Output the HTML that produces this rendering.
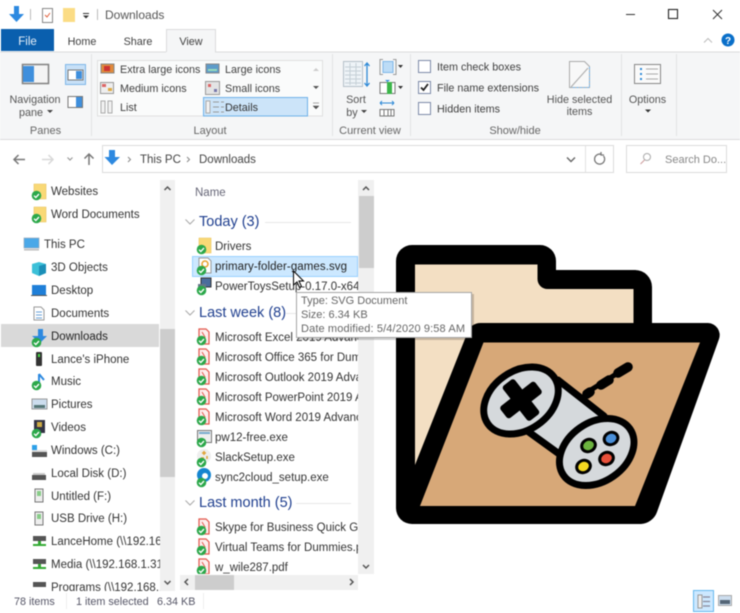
<!DOCTYPE html>
<html><head><meta charset="utf-8"><style>
html,body{margin:0;padding:0;background:#fff;overflow:hidden;width:740px;height:613px}
svg{display:block;filter:blur(.4px)}
text{font-family:"Liberation Sans",sans-serif;font-size:11.5px;fill:#333}
.r{font-size:10.8px;fill:#3f3f3f}
.l{font-size:11px;fill:#666;text-anchor:middle}
.c{text-anchor:middle}
.g{font-size:14.5px;fill:#1f3f8f}
.t{font-size:11px;fill:#666}
</style></head><body>
<svg width="740" height="613" viewBox="0 0 740 613" xmlns="http://www.w3.org/2000/svg">
<defs>
<symbol id="ck" viewBox="0 0 11 11" overflow="visible"><circle cx="5.5" cy="5.5" r="4.8" fill="#2ba84a"/><path d="M3 5.7l1.800 1.800L8 4" fill="none" stroke="#fff" stroke-width="1.300"/></symbol>
<symbol id="fo" viewBox="0 0 16 18" overflow="visible"><path d="M3 1h12v15H3z" fill="#f9d976" stroke="#e8c25c" stroke-width=".6"/><use href="#ck" x="0" y="7" width="11" height="11"/></symbol>
<symbol id="pdf" viewBox="0 0 16 18" overflow="visible"><path d="M3 1h7l3 3v12H3z" fill="#fdeeee" stroke="#e2574c" stroke-width="1.200"/><path d="M6 4l3 5-4 2 5 1" fill="none" stroke="#e2574c" stroke-width="1"/><use href="#ck" x="0" y="7" width="11" height="11"/></symbol>
<clipPath id="fl"><rect x="180" y="180" width="178" height="394"/></clipPath>
<clipPath id="sb"><rect x="0" y="180" width="160" height="411"/></clipPath>
</defs>

<!-- Title bar -->
<path d="M14 7v8h-5l7.500 8 7.500-8h-5V7z" fill="#2d89e0" transform="translate(0,-1)"/>
<rect x="30" y="9" width="1" height="11" fill="#bbb"/>
<rect x="42.500" y="8.500" width="10" height="14" fill="#fff" stroke="#888"/><path d="M45 15l2 2 3-4" fill="none" stroke="#e0603c" stroke-width="1"/>
<rect x="63" y="8" width="12" height="14" fill="#fbdc85"/>
<rect x="83" y="13" width="6" height="1" fill="#333"/><path d="M83 15.500h6l-3 3z" fill="#333"/>
<rect x="97" y="9" width="1" height="11" fill="#bbb"/>
<text x="105" y="19" style="font-size:12px;fill:#555">Downloads</text>
<path d="M626 14.500h9" stroke="#333" stroke-width="1"/>
<rect x="668.500" y="9.500" width="9" height="9" fill="none" stroke="#222" stroke-width="1.100"/>
<path d="M713 10l9 9M722 10l-9 9" stroke="#333" stroke-width="1"/>

<!-- Tabs -->
<rect x="1" y="29" width="53" height="22" fill="#0a5fae"/>
<text x="27.500" y="45" class="c" style="fill:#e9f1f9;font-size:11.500px">File</text>
<text x="82" y="45" class="c r">Home</text>
<text x="138" y="45" class="c r">Share</text>
<path d="M166.500 52V29.500h49V52" fill="#f5f6f7" stroke="#dadbdc"/>
<text x="191" y="45" class="c r">View</text>
<path d="M708 42.500l4-4 4 4" transform="translate(-4,0)" fill="none" stroke="#bbb" stroke-width="1"/>
<circle cx="728" cy="40" r="6.500" fill="#0a6fc9"/><text x="728" y="44" class="c" style="font-size:10px;font-weight:bold;fill:#fff">?</text>

<!-- Ribbon -->
<rect x="0" y="52" width="740" height="87" fill="#f5f6f7"/>
<rect x="0" y="51.500" width="166" height="1" fill="#dadbdc"/><rect x="215" y="51.500" width="525" height="1" fill="#dadbdc"/>
<rect x="0" y="139" width="740" height="1" fill="#dadbdc"/>
<rect x="91" y="54" width="1" height="82" fill="#e2e3e4"/><rect x="332" y="54" width="1" height="82" fill="#e2e3e4"/><rect x="410" y="54" width="1" height="82" fill="#e2e3e4"/><rect x="621" y="54" width="1" height="82" fill="#e2e3e4"/><rect x="676" y="54" width="1" height="82" fill="#e2e3e4"/>
<!-- panes -->
<rect x="22.500" y="64.500" width="26" height="19" fill="#f4f4f4" stroke="#808080" stroke-width="1.500"/><rect x="23" y="66" width="11" height="16" fill="#3f8fdc"/>
<rect x="65.500" y="64.500" width="20" height="20" fill="#c7e0f7" stroke="#7fb7e8"/><rect x="68" y="70" width="15" height="10" fill="#fff" stroke="#777"/><rect x="76" y="71" width="6" height="8" fill="#3f8fdc"/>
<rect x="68" y="96.500" width="14.500" height="11" fill="#fff" stroke="#777"/><rect x="76" y="97" width="6" height="10" fill="#3f8fdc"/>
<text x="35" y="103" class="c r" style="fill:#555">Navigation</text><text x="31" y="116" class="c r" style="fill:#555">pane</text><path d="M47 110h6l-3 3z" fill="#444"/>
<text x="45.500" y="134" class="l">Panes</text>
<!-- layout -->
<rect x="97.500" y="60.500" width="225" height="55.500" fill="#fafbfb" stroke="#dfe0e1"/>
<rect x="203.500" y="97.500" width="104" height="18.500" fill="#cce4f9" stroke="#6fb1e8"/>
<rect x="101" y="64" width="13" height="9" fill="#e08a3c" stroke="#888"/><rect x="104" y="66" width="6" height="5" fill="#c33"/>
<rect x="206" y="64" width="13" height="9" fill="#5d9bc9" stroke="#888"/><rect x="208" y="69" width="9" height="2" fill="#9db"/>
<rect x="100.500" y="82.500" width="13" height="11" fill="#eee" stroke="#999"/><rect x="102" y="84" width="4" height="3" fill="#d66"/><rect x="108" y="88" width="4" height="3" fill="#da4"/>
<rect x="205.500" y="81.500" width="14" height="13" fill="#e4e4e4" stroke="#999"/><rect x="208" y="84" width="3" height="3" fill="#d66"/><rect x="214" y="89" width="3" height="3" fill="#77a"/>
<path d="M101 101h4v12h-4zM108 101h4v12h-4z" fill="#f2f2f2" stroke="#aaa"/>
<path d="M206 101h4v12h-4z" fill="#f2f2f2" stroke="#aaa"/><path d="M213 102h6M213 107h6M213 112h6M221 102h3M221 107h3M221 112h3" stroke="#999"/>
<text x="120" y="73" class="r">Extra large icons</text><text x="225" y="73" class="r">Large icons</text>
<text x="120" y="92" class="r">Medium icons</text><text x="225" y="92" class="r">Small icons</text>
<text x="120" y="111" class="r">List</text><text x="225" y="111" class="r" style="fill:#333">Details</text>
<path d="M313 71l3-3 3 3z" fill="#ccc"/><path d="M313 86h6l-3 3z" fill="#555"/><path d="M313 103h6M313 106h6l-3 3z" fill="#555" stroke="#555" stroke-width=".5"/>
<text x="210" y="134" class="l">Layout</text>
<!-- current view -->
<rect x="343.500" y="61.500" width="19" height="25" fill="#eef3f7" stroke="#b5c0c8"/><path d="M345 67h16M345 71h16M345 75h16M345 79h16M345 83h16M350 63v22M356 63v22" stroke="#c5cfd6"/>
<path d="M367 63v23M364.500 66l2.500-3 2.500 3M364.500 83l2.500 3 2.500-3" fill="none" stroke="#2d89d6" stroke-width="1.300"/>
<text x="356" y="103" class="c r" style="fill:#555">Sort</text><text x="352" y="116" class="c r" style="fill:#555">by</text><path d="M361 110h6l-3 3z" fill="#444"/>
<rect x="383" y="61.500" width="10" height="11" fill="#bcdcf6" stroke="#7fb7e8"/><path d="M383 59.500h-3v15h3M393 59.500h3v15h-3" fill="none" stroke="#999"/>
<path d="M398 65h5l-2.500 3z" fill="#333"/>
<rect x="380" y="82.500" width="15" height="11" fill="#fff" stroke="#777"/><rect x="387" y="82" width="5" height="12" fill="#3cb54a"/><path d="M385 80h5l-2.500 2z" fill="#2d89d6"/>
<path d="M398 86h5l-2.500 3z" fill="#333"/>
<path d="M380 103h14M380 103l2-2M380 103l2 2M394 103l-2-2M394 103l-2 2" stroke="#2d89d6" stroke-width="1" fill="none"/>
<rect x="380" y="109.500" width="14" height="6.500" fill="#fff" stroke="#777"/><path d="M384 110v6M388 110v6M391 110v6" stroke="#777"/>
<text x="370" y="134" class="l">Current view</text>
<!-- show hide -->
<rect x="418.500" y="60.500" width="12" height="12" fill="#fff" stroke="#7d8aa8"/><rect x="418.500" y="81.500" width="12" height="12" fill="#fff" stroke="#7d8aa8"/><rect x="418.500" y="102.500" width="12" height="12" fill="#fff" stroke="#7d8aa8"/>
<path d="M421 87.500l2.500 2.500 4.500-6" fill="none" stroke="#222" stroke-width="1.800"/>
<text x="437" y="70.500" class="r">Item check boxes</text><text x="437" y="91.500" class="r">File name extensions</text><text x="437" y="112.500" class="r">Hidden items</text>
<path d="M569.500 61.500h15l5 5v21h-20z" fill="#f8f8f8" stroke="#aaa"/><path d="M571 87l17-19" stroke="#aaa"/><path d="M589.500 67v20.500H571" fill="none" stroke="#6fb1e8" stroke-dasharray="2 1.500"/>
<text x="579.500" y="103" class="c r" style="fill:#555">Hide selected</text><text x="579.500" y="115" class="c r" style="fill:#555">items</text>
<text x="515" y="134" class="l">Show/hide</text>
<!-- options -->
<rect x="634.500" y="64.500" width="26" height="19" fill="#fafafa" stroke="#888"/><path d="M640 69h2M640 74h2M640 79h2" stroke="#2d89d6" stroke-width="2"/><path d="M646 69h12M646 74h12M646 79h12" stroke="#aaa"/>
<text x="647.500" y="103" class="c r" style="fill:#555">Options</text><path d="M645 109.500h6l-3 3z" fill="#333"/>

<!-- Nav row -->
<path d="M25 159.500H14M18.500 155l-4.500 4.500 4.500 4.500" fill="none" stroke="#777" stroke-width="1.500"/>
<path d="M42 159.500h11M48.500 155l4.500 4.500-4.500 4.500" fill="none" stroke="#d8d8d8" stroke-width="1.500"/>
<path d="M67.500 157.500l2.500 2.500 2.500-2.500" fill="none" stroke="#999" stroke-width="1.200"/>
<path d="M89 165v-11M84.500 158.500l4.500-4.500 4.500 4.500" fill="none" stroke="#777" stroke-width="1.500"/>
<rect x="102.500" y="145.500" width="511" height="27" fill="#fff" stroke="#dcdcdc"/>
<path d="M109 150h6v7h5l-8 8-7.500-8h4.500z" fill="#2d89e0"/>
<path d="M128 157l2.500 2.500-2.500 2.500M187 157l2.500 2.500-2.500 2.500" fill="none" stroke="#888"/>
<text x="140" y="163" style="font-size:11.500px;fill:#444">This PC</text><text x="199" y="163" style="font-size:11.500px;fill:#444">Downloads</text>
<path d="M567 157.500l4 4 4-4" fill="none" stroke="#666" stroke-width="1.400"/>
<rect x="585" y="146" width="1" height="26" fill="#e2e2e2"/>
<path d="M603.500 156a5 5 0 1 1-2-1.500M601 152v3h3" fill="none" stroke="#777" stroke-width="1.300"/>
<rect x="626.500" y="145.500" width="100" height="27" fill="#fff" stroke="#dcdcdc"/>
<circle cx="647" cy="157" r="3.500" fill="none" stroke="#aaa"/><path d="M644.500 160l-4 4" stroke="#c99" stroke-width="1"/>
<text x="665" y="163" style="font-size:11px;fill:#888">Search Do...</text>

<!-- Sidebar -->
<rect x="1" y="324" width="158" height="23" fill="#d9d9d9"/>
<rect x="160" y="180" width="15" height="411" fill="#f0f0f0"/>
<rect x="160" y="329" width="15" height="148" fill="#cdcdcd"/>
<path d="M164.500 190l3-3 3 3" fill="none" stroke="#555" stroke-width="1.500"/><path d="M164.500 581l3 3 3-3" fill="none" stroke="#555" stroke-width="1.500"/>
<g clip-path="url(#sb)">
<use href="#fo" x="31" y="183" width="16" height="18"/><use href="#fo" x="31" y="206" width="16" height="18"/>
<rect x="24" y="238" width="15" height="10" fill="#4aa8e8" stroke="#9ab" stroke-width=".7"/><rect x="24" y="249" width="15" height="1.500" fill="#bbb"/>
<path d="M39 262l7 2v9l-7 3-7-3v-9z" fill="#3cc0d8"/><path d="M39 266v10l7-3v-9z" fill="#1b8fb8"/>
<rect x="32" y="285" width="14" height="10" fill="#1f7fd8"/><rect x="31" y="295" width="16" height="1" fill="#555"/>
<path d="M34 307h7l3 3v10H34z" fill="#fff" stroke="#999"/><path d="M36 312h6M36 315h6M36 318h6" stroke="#68a0d8"/>
<path d="M38 329h5v7h4l-7 7-8-7h6z" fill="#2d89e0"/><use href="#ck" x="31" y="337" width="11" height="11"/>
<rect x="36" y="352" width="6" height="14" rx="1" fill="#333"/><rect x="38" y="354" width="2" height="3" fill="#4d4"/>
<path d="M39 374v12M39 374l5 6" fill="none" stroke="#2d89e0" stroke-width="2"/><use href="#ck" x="31" y="380" width="11" height="11"/>
<rect x="32" y="399" width="15" height="10" fill="#cde" stroke="#999"/><rect x="34" y="405" width="11" height="3" fill="#577"/>
<rect x="34" y="420" width="11" height="13" fill="#334"/><rect x="37" y="422" width="5" height="5" fill="#ca4"/><use href="#ck" x="31" y="428" width="11" height="11"/>
<rect x="32" y="445" width="5" height="5" fill="#2da0e8"/><rect x="32" y="452" width="15" height="5" fill="#555"/><rect x="32" y="450" width="15" height="2" fill="#ddd"/>
<rect x="32" y="475" width="14" height="5" fill="#555"/><rect x="33" y="473" width="12" height="2" fill="#ccc"/>
<rect x="35" y="489" width="8" height="13" fill="#eee" stroke="#777"/><rect x="37" y="491" width="4" height="5" fill="#8c8"/>
<rect x="35" y="512" width="8" height="13" fill="#eee" stroke="#777"/><rect x="37" y="514" width="4" height="5" fill="#8c8"/>
<rect x="33" y="536" width="13" height="5" fill="#555"/><rect x="33" y="544" width="13" height="2" fill="#3a3"/><rect x="38" y="541" width="3" height="4" fill="#3a3"/>
<rect x="33" y="559" width="13" height="5" fill="#555"/><rect x="33" y="567" width="13" height="2" fill="#3a3"/><rect x="38" y="564" width="3" height="4" fill="#3a3"/>
<rect x="33" y="582" width="13" height="5" fill="#555"/>
<text x="51" y="195">Websites</text><text x="51" y="218">Word Documents</text>
<text x="44" y="248">This PC</text><text x="51" y="271">3D Objects</text><text x="51" y="294">Desktop</text><text x="51" y="317">Documents</text><text x="51" y="340" style="fill:#222">Downloads</text><text x="51" y="363">Lance's iPhone</text><text x="51" y="385">Music</text><text x="51" y="408">Pictures</text><text x="51" y="431">Videos</text><text x="51" y="454">Windows (C:)</text><text x="51" y="477">Local Disk (D:)</text><text x="51" y="500">Untitled (F:)</text><text x="51" y="522">USB Drive (H:)</text><text x="51" y="545">LanceHome (\\192.168.1.31)</text><text x="51" y="568">Media (\\192.168.1.31)</text><text x="51" y="591">Programs (\\192.168.1.31)</text>
</g>

<!-- File list -->
<text x="195" y="196" style="fill:#667">Name</text>
<rect x="358" y="180" width="16" height="394" fill="#f0f0f0"/>
<rect x="359" y="196" width="15" height="72" fill="#cdcdcd"/>
<path d="M363 190l3-3 3 3" fill="none" stroke="#555" stroke-width="1.500"/><path d="M363 565l3 3 3-3" fill="none" stroke="#555" stroke-width="1.500"/>
<rect x="180" y="575" width="178" height="15" fill="#f0f0f0"/><rect x="195" y="575" width="39" height="15" fill="#cdcdcd"/>
<path d="M188 579l-3 3 3 3" fill="none" stroke="#555" stroke-width="1.500"/><path d="M350 579l3 3-3 3" fill="none" stroke="#555" stroke-width="1.500"/>
<g clip-path="url(#fl)">
<path d="M185.500 219.500l4.500 4.500 4.500-4.500M185.500 310.500l4.500 4.500 4.500-4.500M185.500 500.500l4.500 4.500 4.500-4.500" fill="none" stroke="#aaa" stroke-width="1.100"/>
<text x="199" y="226" class="g">Today (3)</text><rect x="265" y="222" width="86" height="1" fill="#e8e8e8"/>
<text x="199" y="317" class="g">Last week (8)</text><rect x="286" y="313" width="65" height="1" fill="#e8e8e8"/>
<text x="199" y="507" class="g">Last month (5)</text><rect x="296" y="503" width="55" height="1" fill="#e8e8e8"/>
<rect x="192.500" y="256.500" width="165" height="20" fill="#cce8ff" stroke="#99d1ff"/>
<use href="#fo" x="196" y="237" width="16" height="18"/>
<path d="M199 258h9l3 3v12h-12z" fill="#fff" stroke="#999"/><circle cx="205" cy="264" r="3" fill="none" stroke="#e8a02c" stroke-width="1.500"/><use href="#ck" x="196" y="265" width="11" height="11"/>
<rect x="201" y="278" width="10" height="9" fill="#4a6d9c" stroke="#333"/><rect x="198" y="284" width="8" height="5" fill="#678"/><use href="#ck" x="196" y="285" width="11" height="11"/>
<use href="#pdf" x="196" y="328" width="16" height="18"/><use href="#pdf" x="196" y="348" width="16" height="18"/><use href="#pdf" x="196" y="368" width="16" height="18"/><use href="#pdf" x="196" y="388" width="16" height="18"/><use href="#pdf" x="196" y="408" width="16" height="18"/>
<rect x="197.500" y="430.500" width="14" height="12" fill="#eee" stroke="#777"/><rect x="199" y="432" width="11" height="2" fill="#7ac"/><use href="#ck" x="196" y="437" width="11" height="11"/>
<circle cx="204" cy="456" r="7" fill="#eee"/><path d="M202 453h4M204 451v4M207 456v3M201 458h3" stroke="#e0a030" stroke-width="1.500"/><use href="#ck" x="196" y="457" width="11" height="11"/>
<circle cx="204" cy="475" r="7" fill="#1585d0"/><circle cx="205" cy="476" r="3" fill="#fff"/><use href="#ck" x="196" y="477" width="11" height="11"/>
<use href="#pdf" x="196" y="518" width="16" height="18"/><use href="#pdf" x="196" y="538" width="16" height="18"/><use href="#pdf" x="196" y="558" width="16" height="18"/>
<text x="215" y="250">Drivers</text><text x="215" y="270" style="fill:#222" textLength="132">primary-folder-games.svg</text><text x="215" y="290">PowerToysSetup-0.17.0-x64.msi</text>
<text x="215" y="341">Microsoft Excel 2019 Advanced</text><text x="215" y="361">Microsoft Office 365 for Dummies</text><text x="215" y="381">Microsoft Outlook 2019 Advanced</text><text x="215" y="401">Microsoft PowerPoint 2019 Adv</text><text x="215" y="421">Microsoft Word 2019 Advanced</text><text x="215" y="441">pw12-free.exe</text><text x="215" y="461">SlackSetup.exe</text><text x="215" y="481">sync2cloud_setup.exe</text>
<text x="215" y="531">Skype for Business Quick Guide</text><text x="215" y="551">Virtual Teams for Dummies.pdf</text><text x="215" y="571">w_wile287.pdf</text>
</g>

<!-- Folder artwork -->
<path d="M412 245H540a16 16 0 0 1 16 16V270H635a17 17 0 0 1 17 17V323H708a12 12 0 0 1 11 16L657 512a18 18 0 0 1-16 12H412a16 16 0 0 1-16-16V261a16 16 0 0 1 16-16Z" fill="#000"/>
<path d="M415 264.500H537.500V279a10 10 0 0 0 10 10H633.500V323H481.500a14 14 0 0 0-15 12L415 465Z" fill="#f3dfc3"/>
<path d="M483.500 342.500H700L635 506H420Z" fill="#d7a878"/>
<!-- controller -->
<path d="M586 393L629 366" stroke="#000" stroke-width="5" stroke-linecap="round" fill="none"/>
<path d="M587 394L590 392M601 385L609 380M618 373L628 367" stroke="#000" stroke-width="9.500" stroke-linecap="round" fill="none"/>
<path d="M558 380L604 416L562 456L526 430Z" fill="#d5d9dc" stroke="#000" stroke-width="7" stroke-linejoin="round"/>
<ellipse cx="521" cy="400.500" rx="40.500" ry="29.500" transform="rotate(-35 521 400.500)" fill="#d5d9dc" stroke="#000" stroke-width="7"/>
<ellipse cx="596.700" cy="452" rx="40.500" ry="29.500" transform="rotate(-35 596.700 452)" fill="#d5d9dc" stroke="#000" stroke-width="7"/>
<g transform="rotate(-38 521 400)"><rect x="499" y="392.500" width="44" height="15" rx="3" fill="#000"/><rect x="513.500" y="378" width="15" height="44" rx="3" fill="#000"/></g>
<ellipse cx="588.500" cy="445.500" rx="7" ry="6" transform="rotate(-25 588.500 445.500)" fill="#6cb33f" stroke="#000" stroke-width="3"/>
<ellipse cx="611" cy="438.500" rx="7" ry="6" transform="rotate(-25 611 438.500)" fill="#4a8fd8" stroke="#000" stroke-width="3"/>
<ellipse cx="606.500" cy="458.500" rx="7" ry="6" transform="rotate(-25 606.500 458.500)" fill="#e8503a" stroke="#000" stroke-width="3"/>
<ellipse cx="583.500" cy="466.500" rx="7" ry="6" transform="rotate(-25 583.500 466.500)" fill="#f4d820" stroke="#000" stroke-width="3"/>

<!-- Tooltip -->
<rect x="298" y="294" width="176" height="46" fill="#000" opacity=".18"/>
<rect x="296.500" y="292.500" width="175" height="45" fill="#fff" stroke="#a5a5a5"/>
<text x="301" y="304" class="t">Type: SVG Document</text><text x="301" y="318" class="t">Size: 6.34 KB</text><text x="301" y="332" class="t" textLength="164">Date modified: 5/4/2020 9:58 AM</text>
<!-- Cursor -->
<path d="M293.500 271v14l3.500-3 2.500 5.500 2-1-2.500-5.500h4.500z" fill="#fff" stroke="#000" stroke-width="1"/>

<!-- Status bar -->
<text x="14" y="605" class="r" style="fill:#556">78 items</text>
<text x="76" y="605" class="r" style="fill:#556">1 item selected</text><text x="157" y="605" class="r" style="fill:#556">6.34 KB</text>
<rect x="66" y="593" width="1" height="16" fill="#eee"/><rect x="203" y="593" width="1" height="16" fill="#eee"/>
<rect x="693.500" y="590.500" width="20" height="21" fill="#cce8ff" stroke="#66b8ee"/>
<path d="M698 595h4v13h-4z" fill="#eee" stroke="#999"/><path d="M703 597h7M703 601.500h7M703 606h7" stroke="#889" stroke-width="1.200"/>
<rect x="718.500" y="595.500" width="13" height="10" fill="#cde" stroke="#aaa"/><rect x="720" y="600" width="10" height="4" fill="#567"/>
</svg>
</body></html>
